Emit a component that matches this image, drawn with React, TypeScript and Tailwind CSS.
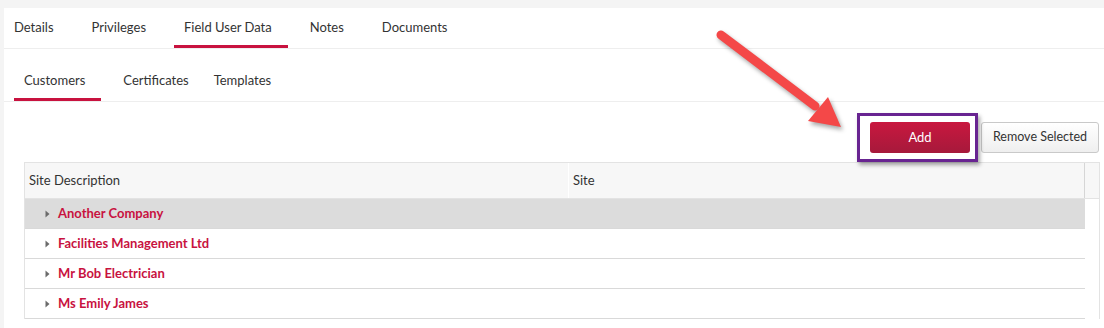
import React from 'react';

const tabs = ['Details', 'Privileges', 'Field User Data', 'Notes', 'Documents'];
const subTabs = ['Customers', 'Certificates', 'Templates'];
const rows = ['Another Company', 'Facilities Management Ltd', 'Mr Bob Electrician', 'Ms Emily James'];

function Caret() {
  return (
    <svg width="5" height="8" viewBox="0 0 5 8" className="shrink-0">
      <path d="M0.5 0.5 L4.5 4 L0.5 7.5 Z" fill="#6b6b6b" />
    </svg>
  );
}

function Arrow() {
  return (
    <svg
      className="absolute left-0 top-0 pointer-events-none"
      width="1104"
      height="328"
      style={{ filter: 'drop-shadow(2px 3px 2px rgba(0,0,0,0.35))' }}
    >
      <line x1="721" y1="35" x2="815" y2="106" stroke="#f44848" strokeWidth="9" strokeLinecap="round" />
      <polygon points="808,121 828,97 841,127" fill="#f44848" />
    </svg>
  );
}

export default function App() {
  return (
    <div
      className="relative w-[1104px] h-[328px] overflow-hidden bg-[#f4f4f4] pt-[8px] pl-[4px] text-[13px] text-[#333]"
      style={{ fontFamily: '"Segoe UI", Lato, "Open Sans", sans-serif' }}
    >
      <div className="h-full bg-white">
        {/* main tabs */}
        <div className="flex h-[41px] gap-[12px] border-b border-[#eeeeee]">
          {tabs.map((t) => (
            <div
              key={t}
              className={`flex items-center pt-[2px] pl-[10px] pr-[16px] border-b-[3px] ${
                t === 'Field User Data' ? 'border-[#c8123f]' : 'border-transparent'
              }`}
            >
              {t}
            </div>
          ))}
        </div>

        {/* sub tabs */}
        <div className="flex h-[53px] pt-[12px] pl-[10px] border-b border-[#eeeeee]">
          {subTabs.map((t) => (
            <div
              key={t}
              className={`flex items-center pt-[2px] pl-[10px] border-b-[3px] ${
                t === 'Customers' ? 'border-[#c8123f] pr-[16px] mr-[12px]' : 'border-transparent pr-[15px]'
              }`}
            >
              {t}
            </div>
          ))}
        </div>

        {/* actions */}
        <div className="flex justify-end gap-[11px] pt-[20px] pr-[5px]">
          <div className="relative">
            <div className="absolute -left-[13px] -top-[9px] w-[121px] h-[49px] border-[3px] border-[#682491] bg-white shadow-[2px_3px_4px_rgba(0,0,0,0.35)]" />
            <button className="relative w-[100px] h-[31px] rounded-[3px] bg-gradient-to-b from-[#c9173f] to-[#a6193b] text-white">
              Add
            </button>
          </div>
          <button className="w-[118px] h-[31px] rounded-[3px] border border-[#c9c9c9] bg-gradient-to-b from-white to-[#efefef] text-[#333] text-[12.5px]">
            Remove Selected
          </button>
        </div>

        {/* grid */}
        <div className="mt-[9px] ml-[20px] mr-[4px] border-l border-r border-t border-[#e3e3e3]">
          <div className="flex h-[36px] bg-[#f7f7f7] border-b border-[#e3e3e3]">
            <div className="w-[544px] flex items-center pl-[4px] border-r border-white">Site Description</div>
            <div className="flex-1 flex items-center pl-[4px] border-r border-[#d6d6d6]">Site</div>
            <div className="w-[14px]" />
          </div>
          <div className="mr-[14px]">
            {rows.map((r, i) => (
              <div
                key={r}
                className={`flex items-center gap-[8px] h-[30px] pl-[20px] border-b border-[#d9d9d9] ${
                  i === 0 ? 'bg-[#dcdcdc]' : 'bg-white'
                }`}
              >
                <Caret />
                <span className="font-bold text-[#c8123f]">{r}</span>
              </div>
            ))}
          </div>
        </div>
      </div>
      <Arrow />
    </div>
  );
}
